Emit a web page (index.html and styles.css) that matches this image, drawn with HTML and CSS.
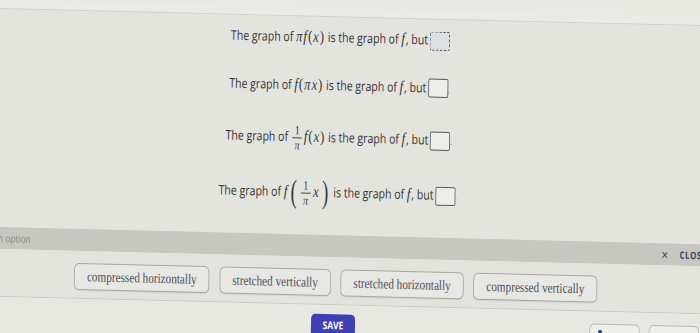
FILE: index.html
```html
<!DOCTYPE html>
<html lang="en">
<head>
<meta charset="utf-8">
<title>Graph transformations</title>
<link rel="stylesheet" href="styles.css">
</head>
<body>
<div class="screen">
  <div class="top"></div>
  <div class="questions">
    <div class="row r1">
      <span class="line">The graph of <span class="m"><i>π</i><i>f</i>(<i>x</i>)</span> is the graph of <i class="m">f</i>, but<span class="box dashed"></span></span>
    </div>
    <div class="row r2">
      <span class="line">The graph of <span class="m"><i>f</i>(<i>π</i><i>x</i>)</span> is the graph of <i class="m">f</i>, but<span class="box"></span><span class="dotend">.</span></span>
    </div>
    <div class="row r3">
      <span class="line">The graph of <span class="frac"><span class="num">1</span><span class="den">π</span></span><span class="m"><i>f</i>(<i>x</i>)</span> is the graph of <i class="m">f</i>, but<span class="box"></span><span class="dotend">.</span></span>
    </div>
    <div class="row r4">
      <span class="line">The graph of <i class="m">f</i><span class="paren">(</span><span class="frac"><span class="num">1</span><span class="den">π</span></span><i class="m mx">x</i><span class="paren">)</span> is the graph of <i class="m">f</i>, but<span class="box"></span><span class="dotend">.</span></span>
    </div>
  </div>
  <div class="bar">
    <span class="hint">n option</span>
    <span class="close"><span class="x">✕</span>CLOSE</span>
  </div>
  <div class="options">
    <div class="opt">compressed horizontally</div>
    <div class="opt">stretched vertically</div>
    <div class="opt">stretched horizontally</div>
    <div class="opt">compressed vertically</div>
  </div>
  <div class="footer">
    <div class="save">SAVE</div>
    <div class="spacer"></div>
    <div class="tool"><span class="dot"></span></div>
    <div class="tool"></div>
  </div>
</div>
</body>
</html>
```

FILE: styles.css
```css
* { box-sizing: border-box; }
html, body { margin: 0; padding: 0; }
body {
  width: 700px;
  height: 333px;
  overflow: hidden;
  background: #e9e9e4;
  font-family: "Open Sans", "Liberation Sans", sans-serif;
}
.screen {
  width: 900px;
  height: 350px;
  transform-origin: 0 0;
  transform: scaleX(0.8) rotate(1.12deg);
  background: #e4e4df;
}
.top {
  height: 9px;
  background: #eaeae6;
  border-bottom: 1px solid #d2d2cd;
}
.questions {
  width: 852px;
  display: flex;
  flex-direction: column;
  color: #343434;
  font-size: 13.2px;
}
.row {
  display: flex;
  align-items: center;
  justify-content: center;
}
.r1 { height: 42px; }
.r2 { height: 53px; }
.r3 { height: 53px; }
.r4 { height: 56px; }
.line { white-space: nowrap; }
.m {
  font-family: "Liberation Serif", serif;
  font-size: 16px;
  letter-spacing: 1.2px;
}
.m i { font-style: italic; }
.mx { margin-left: 1px; }
.box {
  display: inline-block;
  width: 25px;
  height: 19px;
  margin-left: 2px;
  vertical-align: middle;
  border: 1px solid #5a5a5a;
  border-radius: 2px;
  background: #ededea;
}
.box.dashed {
  border: 1px dashed #4a4a4a;
  background: #dcdfe3;
}
.dotend { font-size: 9px; color: #777; }
.frac {
  display: inline-flex;
  flex-direction: column;
  align-items: center;
  vertical-align: middle;
  font-family: "Liberation Serif", serif;
  font-size: 12.5px;
  line-height: 12px;
  margin: 0 2px 0 2px;
}
.num {
  padding: 0 3px 1px;
  border-bottom: 1px solid #444;
}
.den { font-style: italic; padding-top: 1px; }
.paren {
  display: inline-block;
  font-family: "Liberation Serif", serif;
  font-size: 23px;
  line-height: 22px;
  vertical-align: middle;
  transform: scaleY(1.4);
  margin: 0 3px;
}
.bar {
  height: 22px;
  margin-top: 14px;
  background: #c7c7c1;
  display: flex;
  align-items: center;
  justify-content: space-between;
  padding: 0 12px 0 0;
}
.hint {
  margin-left: 2px;
  font-size: 10.5px;
  color: #8a8a85;
}
.close {
  display: flex;
  align-items: center;
  font-size: 10px;
  font-weight: 700;
  letter-spacing: 0.5px;
  color: #3d4562;
}
.close .x {
  font-weight: 400;
  font-size: 11px;
  margin-right: 14px;
}
.options {
  height: 48px;
  padding: 12px 50px 0 0;
  display: flex;
  justify-content: center;
  align-items: flex-start;
  gap: 12.5px;
  background: #e3e3de;
  border-bottom: 1px solid #c9c9c4;
}
.opt {
  height: 27px;
  padding: 0 15px;
  display: flex;
  align-items: center;
  border: 1px solid #a7a7a3;
  border-radius: 6px;
  background: #e7e7e3;
  box-shadow: 0 1px 1px rgba(0, 0, 0, 0.07);
  font-family: "Liberation Serif", serif;
  font-size: 14px;
  color: #4c5160;
  white-space: nowrap;
}
.footer {
  display: flex;
  align-items: flex-start;
  padding: 9px 20px 0 395px;
  background: #e8e8e3;
  height: 60px;
}
.save {
  width: 55px;
  height: 28px;
  padding-top: 4px;
  text-align: center;
  background: #3f3fb6;
  color: #ffffff;
  font-size: 10.5px;
  font-weight: 700;
  border-radius: 5px;
}
.spacer { flex: 1; }
.tool {
  width: 63px;
  height: 30px;
  margin-top: 3px;
  margin-left: 11px;
  padding: 5px 0 0 10px;
  border: 1px solid #b8b8b4;
  border-radius: 6px;
  background: #eeeeeb;
}
.dot {
  display: block;
  width: 5px;
  height: 5px;
  border-radius: 50%;
  background: #27409a;
}
```
